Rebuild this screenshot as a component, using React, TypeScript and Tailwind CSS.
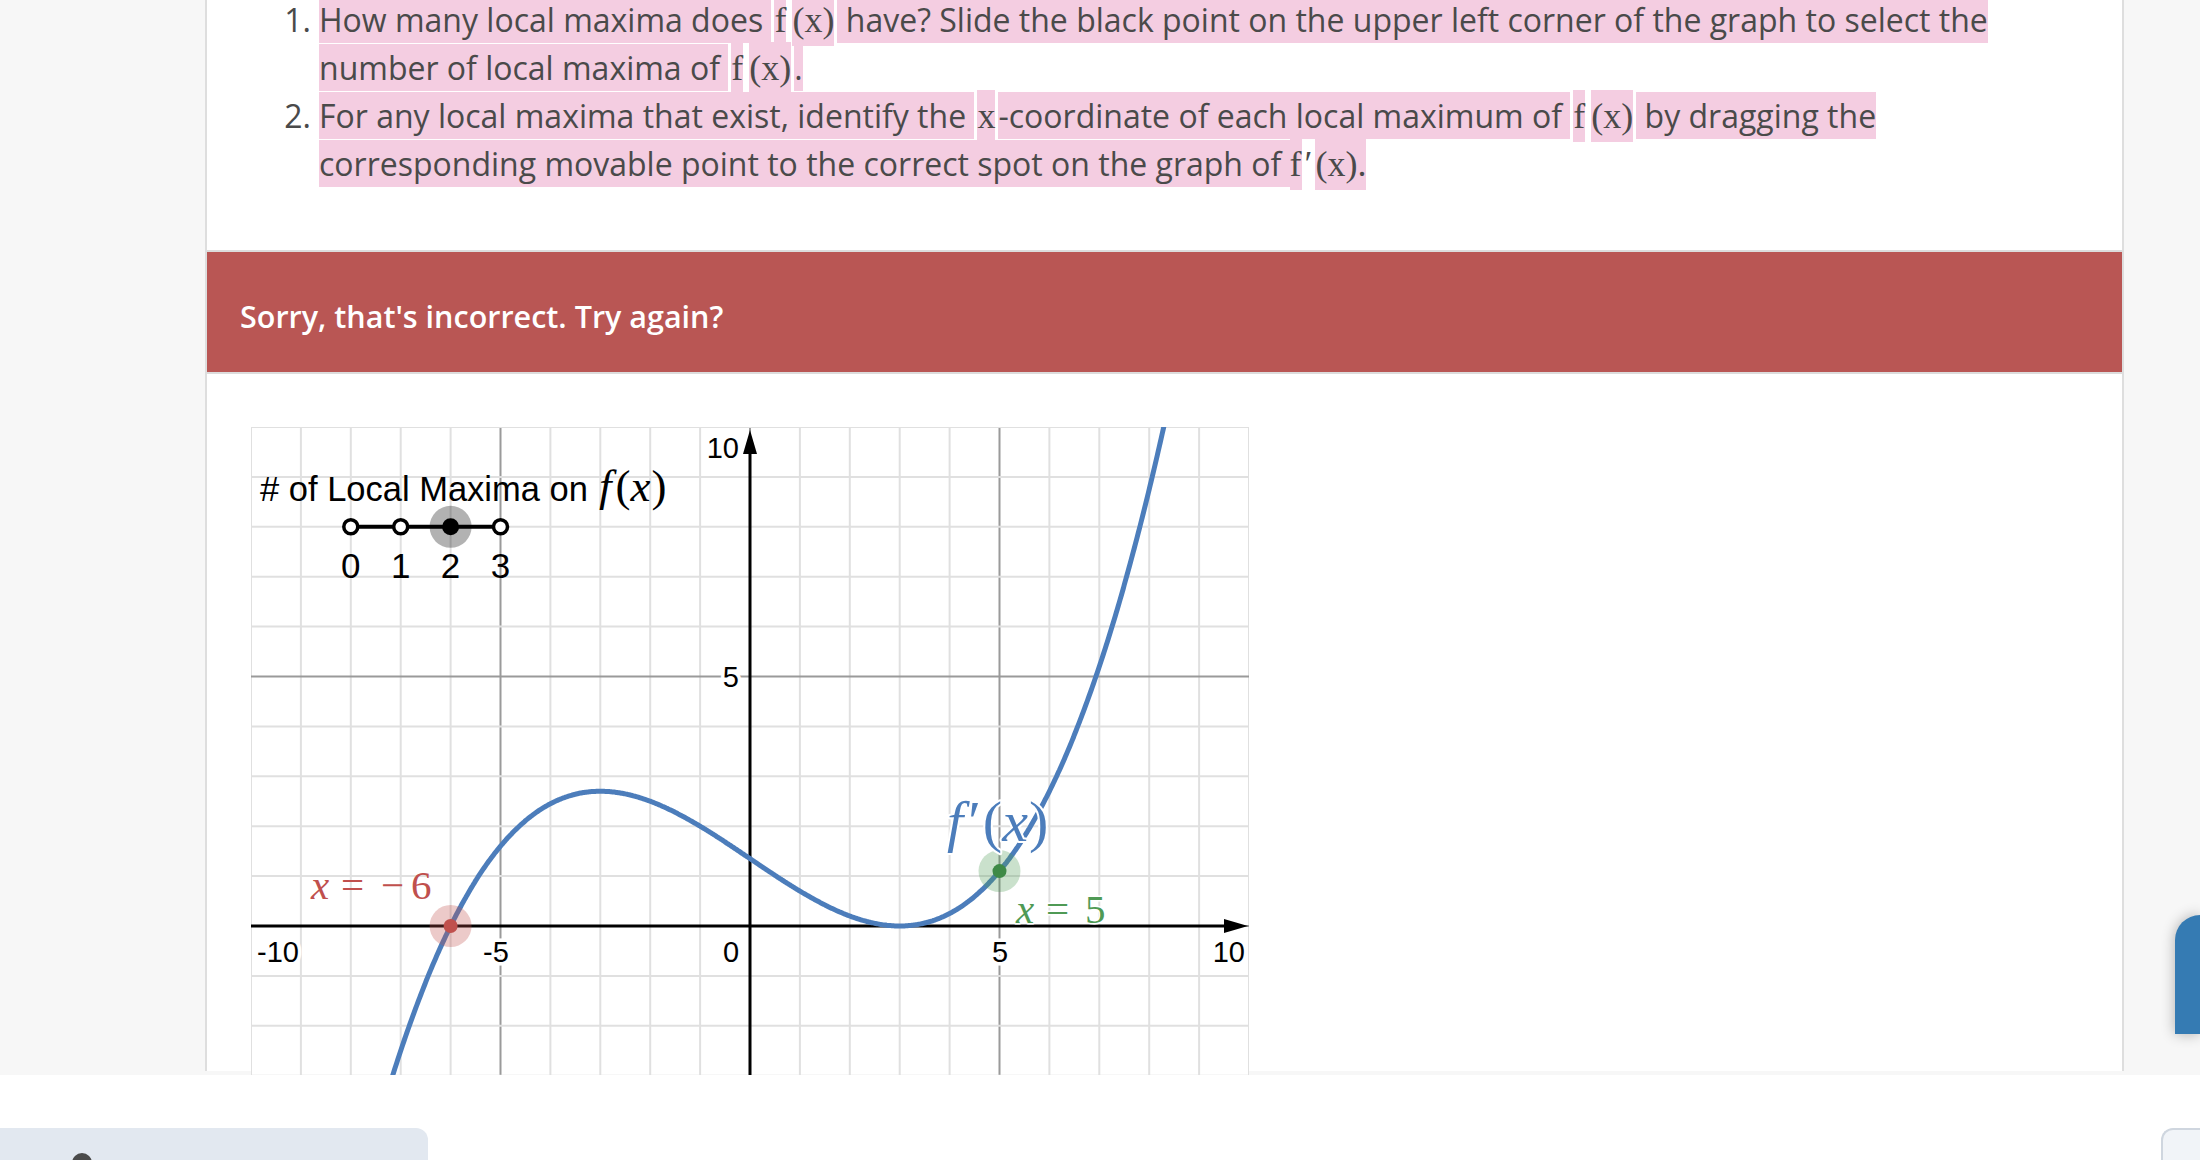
import React from "react";

const U = 49.9;
const X = (x: number) => (x + 10) * U;
const Y = (y: number) => (10 - y) * U;
const fp = (x: number) => 0.025 * (x + 6) * (x - 3) ** 2;

function curvePath() {
  const pts: string[] = [];
  for (let x = -7.6; x <= 8.6; x += 0.02) {
    pts.push(`${X(x).toFixed(1)},${Y(fp(x)).toFixed(1)}`);
  }
  return "M" + pts.join("L");
}

const SANS = "'Liberation Sans', Arial, sans-serif";
const SERIF = "'Liberation Serif', 'Times New Roman', serif";

function Graph() {
  const ticks = Array.from({ length: 21 }, (_, i) => i - 10);
  const halo = { stroke: "#fff", strokeWidth: 7, paintOrder: "stroke" as const, strokeLinejoin: "round" as const };
  return (
    <svg width="998" height="998" viewBox="0 0 998 998" className="block">
      <defs>
        <clipPath id="box">
          <rect x="0" y="0" width="998" height="998" />
        </clipPath>
      </defs>
      <rect x="0" y="0" width="998" height="998" fill="#fff" />
      {ticks.map((t) => (
        <line key={"v" + t} x1={X(t)} y1={0} x2={X(t)} y2={998} stroke={t % 5 === 0 && Math.abs(t) !== 10 ? "#9a9a9a" : "#e0e0e0"} strokeWidth="2" />
      ))}
      {ticks.map((t) => (
        <line key={"h" + t} x1={0} y1={Y(t)} x2={998} y2={Y(t)} stroke={t % 5 === 0 && Math.abs(t) !== 10 ? "#9a9a9a" : "#e0e0e0"} strokeWidth="2" />
      ))}

      {/* axes */}
      <line x1={0} y1={Y(0)} x2={975} y2={Y(0)} stroke="#000" strokeWidth="3" />
      <polygon points={`997,${Y(0)} 973,${Y(0) - 7} 973,${Y(0) + 7}`} fill="#000" />
      <line x1={X(0)} y1={998} x2={X(0)} y2={24} stroke="#000" strokeWidth="3" />
      <polygon points={`${X(0)},3 ${X(0) - 7},27 ${X(0) + 7},27`} fill="#000" />

      {/* tick labels */}
      <g fontFamily={SANS} fontSize="29" fill="#000" style={halo}>
        <text x="488" y="31" textAnchor="end">10</text>
        <text x="488" y="260" textAnchor="end">5</text>
        <text x="6" y="535">-10</text>
        <text x="245" y="535" textAnchor="middle">-5</text>
        <text x="480" y="535" textAnchor="middle">0</text>
        <text x="749" y="535" textAnchor="middle">5</text>
        <text x="994" y="535" textAnchor="end">10</text>
      </g>

      {/* slider */}
      <text x="9" y="74" fontFamily={SANS} fontSize="34.5" fill="#000">
        # of Local Maxima on
      </text>
      <text x="348" y="74" fontFamily={SERIF} fontSize="45" fill="#000">
        <tspan fontStyle="italic">f</tspan>
        <tspan dx="4">(</tspan>
        <tspan fontStyle="italic">x</tspan>
        <tspan dx="1">)</tspan>
      </text>
      <line x1={X(-8)} y1={Y(8)} x2={X(-5)} y2={Y(8)} stroke="#000" strokeWidth="4" />
      <circle cx={X(-6)} cy={Y(8)} r="21" fill="#000" fillOpacity="0.3" />
      {[-8, -7, -5].map((t) => (
        <circle key={t} cx={X(t)} cy={Y(8)} r="7" fill="#fff" stroke="#000" strokeWidth="3.5" />
      ))}
      <circle cx={X(-6)} cy={Y(8)} r="8.5" fill="#000" />
      <g fontFamily={SANS} fontSize="35" fill="#000" textAnchor="middle">
        <text x={X(-8)} y="151">0</text>
        <text x={X(-7)} y="151">1</text>
        <text x={X(-6)} y="151">2</text>
        <text x={X(-5)} y="151">3</text>
      </g>

      {/* curve */}
      <path d={curvePath()} fill="none" stroke="#4c7dbb" strokeWidth="5" clipPath="url(#box)" />

      {/* red point */}
      <circle cx={X(-6)} cy={Y(0)} r="21" fill="#c0504d" fillOpacity="0.3" />
      <circle cx={X(-6)} cy={Y(0)} r="7" fill="#c0504d" />
      <text y="472" fontFamily={SERIF} fontSize="41" fill="#c0504d">
        <tspan x="60" fontStyle="italic">x</tspan>
        <tspan x="90">=</tspan>
        <tspan x="130">−</tspan>
        <tspan x="160">6</tspan>
      </text>

      {/* green point */}
      <circle cx={X(5)} cy={Y(fp(5))} r="21" fill="#4f9a55" fillOpacity="0.3" />
      <circle cx={X(5)} cy={Y(fp(5))} r="7" fill="#3e8a46" />
      <text y="496" fontFamily={SERIF} fontSize="41" fill="#4f9a55" style={{ ...halo, strokeWidth: 3 }}>
        <tspan x="765" fontStyle="italic">x</tspan>
        <tspan x="795">=</tspan>
        <tspan x="834">5</tspan>
      </text>

      {/* f'(x) label */}
      <text x="696" y="414" fontFamily={SERIF} fontSize="58" fill="#4c7dbb" style={{ ...halo, strokeWidth: 4 }}>
        <tspan fontStyle="italic">f</tspan>
        <tspan dx="5">′</tspan>
        <tspan dx="2">(</tspan>
        <tspan fontStyle="italic">x</tspan>
        <tspan dx="1">)</tspan>
      </text>
    </svg>
  );
}

function Hl({ children }: { children: React.ReactNode }) {
  return <span className="bg-[#f4cde1] py-[2px]">{children}</span>;
}

function M({ children }: { children: React.ReactNode }) {
  return (
    <span className="mx-[3px] bg-[#f4cde1] py-[6px] font-['Liberation_Serif','Times_New_Roman',serif] text-[36px] leading-none">
      {children}
    </span>
  );
}

export default function App() {
  return (
    <div className="h-[1160px] w-[2200px] overflow-hidden bg-white font-['Open_Sans','Noto_Sans',sans-serif]">
      <div className="relative h-[1075px] overflow-hidden bg-[#f7f7f7]">
        <div className="ml-[205px] h-full w-[1919px] border-x-2 border-[#dedede] bg-white">
          <div className="-mt-[4px] pl-[72px] text-[32px] leading-[48px] text-[#4a4a4a]">
            <div className="flex">
              <span className="w-[32px] shrink-0 text-right">1.</span>
              <div className="ml-[8px] w-[1765px]">
                <Hl>How many local maxima does </Hl>
                <M>f</M>
                <M>(x)</M>
                <Hl> have? Slide the black point on the upper left corner of the graph to select the number of local maxima of </Hl>
                <M>f</M>
                <M>(x)</M>
                <Hl>.</Hl>
              </div>
            </div>
            <div className="flex">
              <span className="w-[32px] shrink-0 text-right">2.</span>
              <div className="ml-[8px] w-[1765px]">
                <Hl>For any local maxima that exist, identify the </Hl>
                <M>x</M>
                <Hl>-coordinate of each local maximum of </Hl>
                <M>f</M>
                <M>(x)</M>
                <Hl> by dragging the corresponding movable point to the correct spot on the graph of </Hl>
                <span className="font-['Liberation_Serif','Times_New_Roman',serif] text-[36px] leading-none">
                  <span className="bg-[#f4cde1] py-[6px]">f</span>
                  <span className="px-[3px]">′</span>
                  <span className="bg-[#f4cde1] py-[6px]">(x).</span>
                </span>
              </div>
            </div>
          </div>

          <div className="mt-[62px] flex h-[124px] items-center border-y-2 border-[#dcdcdc] bg-[#b95654] pl-[33px] pt-[10px]">
            <span className="text-[30.5px] font-semibold text-white">Sorry, that's incorrect. Try again?</span>
          </div>

          <div className="pl-[44px] pt-[53px]">
            <Graph />
          </div>
        </div>

        <div className="absolute right-0 top-[915px] h-[119px] w-[25px] rounded-tl-[26px] bg-[#357bb3] shadow-[0_0_14px_rgba(0,0,0,0.3)]" />
      </div>

      <div className="flex items-start justify-between pt-[53px]">
        <div className="relative h-[40px] w-[428px] rounded-tr-[12px] bg-[#e2e8f0]">
          <div className="absolute left-[72px] top-[25px] h-[22px] w-[20px] rounded-t-full bg-[#4a4a4a]" />
        </div>
        <div className="h-[40px] w-[39px] rounded-tl-[12px] border-l-2 border-t-2 border-[#cfd6df] bg-[#f1f4f8]" />
      </div>
    </div>
  );
}
